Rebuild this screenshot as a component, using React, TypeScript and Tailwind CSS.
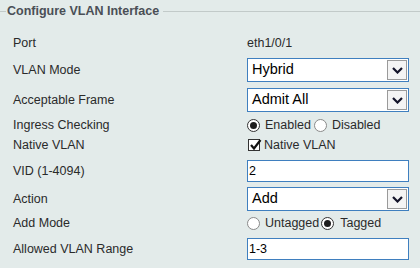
import React from "react";

const Radio = ({ checked }: { checked?: boolean }) => (
  <span
    className={`w-[13px] h-[13px] rounded-full border bg-white flex items-center justify-center shrink-0 ${
      checked ? "border-[#333]" : "border-[#8a8a8a]"
    }`}
  >
    {checked && <span className="w-[7px] h-[7px] rounded-full bg-[#1e1e1e]" />}
  </span>
);

const Select = ({ value }: { value: string }) => (
  <div className="relative w-[162px] h-[24px] border border-[#3f7fbf] bg-white flex items-center pl-[4px] text-[14.5px] text-black">
    {value}
    <span className="absolute right-[1px] top-[1px] w-[20px] h-[20px] border border-[#9a9a9a] bg-[#f4f4f4] flex items-center justify-center">
      <svg width="11" height="7" viewBox="0 0 11 7">
        <path d="M1 1 L5.5 5.5 L10 1" fill="none" stroke="#14142a" strokeWidth="2.2" />
      </svg>
    </span>
  </div>
);

const Input = ({ value }: { value: string }) => (
  <div className="w-[162px] h-[22px] border border-[#3f7fbf] bg-white flex items-center pl-[1px] text-[12.5px] text-black">
    {value}
  </div>
);

const Row = ({ label, h, children }: { label: string; h: string; children: React.ReactNode }) => (
  <div className={`flex items-center ${h}`}>
    <div className="w-[247px] pl-[13px]">{label}</div>
    <div className="flex items-center">{children}</div>
  </div>
);

export default function App() {
  return (
    <div className="w-[420px] h-[268px] bg-[#e3ebea] font-['Liberation_Sans',Arial,sans-serif] text-[12.5px] text-[#2a2a2a] overflow-hidden">
      <div className="flex items-center h-[22px]">
        <div className="w-[6px] h-px bg-[#c2cac9]" />
        <div className="px-[1px] font-bold text-[12.5px] text-[#4a4f56]">Configure VLAN Interface</div>
        <div className="flex-1 ml-[3px] h-px bg-[#c2cac9]" />
      </div>
      <div className="pt-[9px]">
        <Row label="Port" h="h-[24px]">
          <span>eth1/0/1</span>
        </Row>
        <Row label="VLAN Mode" h="h-[30px]">
          <Select value="Hybrid" />
        </Row>
        <Row label="Acceptable Frame" h="h-[30px]">
          <Select value="Admit All" />
        </Row>
        <Row label="Ingress Checking" h="h-[20px]">
          <Radio checked />
          <span className="ml-[5px]">Enabled</span>
          <span className="ml-[3px]">
            <Radio />
          </span>
          <span className="ml-[5px]">Disabled</span>
        </Row>
        <Row label="Native VLAN" h="h-[20px]">
          <span className="relative ml-[1px] w-[12px] h-[12px] border border-[#333] bg-white shrink-0">
            <svg className="absolute left-[0px] top-[-2px]" width="13" height="13" viewBox="0 0 13 13">
              <path d="M2 7 L5 10.5 L11.5 2" fill="none" stroke="#111" strokeWidth="2.2" />
            </svg>
          </span>
          <span className="ml-[4px]">Native VLAN</span>
        </Row>
        <Row label="VID (1-4094)" h="h-[32px]">
          <Input value="2" />
        </Row>
        <Row label="Action" h="h-[24px]">
          <Select value="Add" />
        </Row>
        <Row label="Add Mode" h="h-[24px]">
          <Radio />
          <span className="ml-[5px]">Untagged</span>
          <span className="ml-[2px]">
            <Radio checked />
          </span>
          <span className="ml-[6px]">Tagged</span>
        </Row>
        <Row label="Allowed VLAN Range" h="h-[28px]">
          <Input value="1-3" />
        </Row>
      </div>
    </div>
  );
}
